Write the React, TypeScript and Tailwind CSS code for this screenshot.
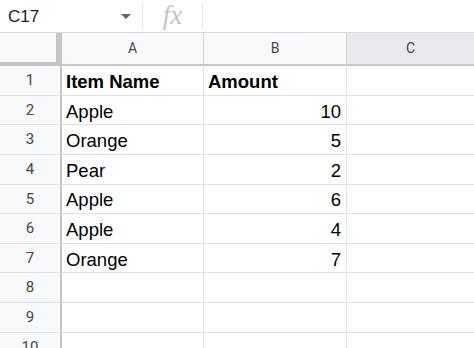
const rows: [string, string, boolean?][] = [
  ['Item Name', 'Amount', true],
  ['Apple', '10'],
  ['Orange', '5'],
  ['Pear', '2'],
  ['Apple', '6'],
  ['Apple', '4'],
  ['Orange', '7'],
  ['', ''],
  ['', ''],
  ['', ''],
];

const cols = ['A', 'B', 'C'];

export default function App() {
  return (
    <div className="w-[474px] h-[348px] overflow-hidden bg-white text-[#202124] font-['Liberation_Sans',Arial,sans-serif]">
      {/* formula bar */}
      <div className="h-[33px] flex items-center border-b border-[#dadce0]">
        <div className="w-[143px] flex items-center justify-between pl-2 pr-2 border-r border-[#e3e3e3] h-[26px]">
          <span className="text-[17px] leading-none">C17</span>
          <svg width="10" height="5" viewBox="0 0 10 5" className="mr-[3px]">
            <path d="M0 0 L10 0 L5 5 Z" fill="#5f6368" />
          </svg>
        </div>
        <div className="w-[60px] h-[26px] flex items-center justify-center border-r border-[#e3e3e3]">
          <span className="text-[27px] leading-none italic text-[#c4c4c4] font-['Liberation_Serif',serif] -mt-[2px]">fx</span>
        </div>
      </div>

      {/* grid */}
      <div className="grid grid-cols-[62px_142px_143px_1fr] font-['Roboto',sans-serif]">
        <div className="h-[33px] bg-[#f8f9fa] border-r-[6px] border-b-[4px] border-[#c4c7c5]" />
        {cols.map((c) => (
          <div
            key={c}
            className={`h-[33px] flex items-center justify-center text-[14px] text-[#444746] border-b-2 border-[#c4c7c5] ${
              c === 'C' ? 'bg-[#e8eaed]' : 'bg-[#f8f9fa] border-r border-r-[#d6d6d6]'
            }`}
          >
            {c}
          </div>
        ))}

        {rows.map(([a, b, bold], i) => (
          <div key={i} className="contents">
            <div className="h-[29.63px] flex items-center justify-center bg-[#f8f9fa] text-[15px] text-[#444746] border-r-2 border-r-[#c4c7c5] border-b border-b-[#e1e1e1]">
              {i + 1}
            </div>
            <div
              className={`h-[29.63px] flex items-center pl-1 pt-[3px] text-[18.5px] text-black font-['Liberation_Sans',Arial,sans-serif] border-r border-b border-[#e1e1e1] ${
                bold ? 'font-bold' : ''
              }`}
            >
              {a}
            </div>
            <div
              className={`h-[29.63px] flex items-center pr-[5px] pt-[3px] text-[18.5px] text-black font-['Liberation_Sans',Arial,sans-serif] border-r border-b border-[#e1e1e1] ${
                bold ? 'font-bold pl-1 justify-start' : 'justify-end'
              }`}
            >
              {b}
            </div>
            <div className="h-[29.63px] border-b border-[#e1e1e1]" />
          </div>
        ))}
      </div>
    </div>
  );
}
